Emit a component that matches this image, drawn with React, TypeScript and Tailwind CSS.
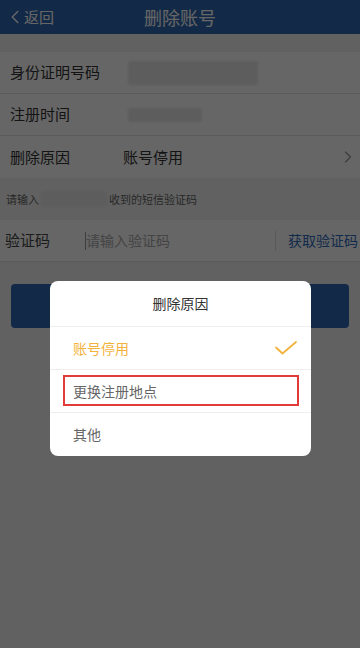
import { ChevronLeft, ChevronRight } from "lucide-react";

const FONT = { fontFamily: '"Noto Sans CJK SC", "Noto Sans", sans-serif' };

const REASONS = ["账号停用", "更换注册地点", "其他"];

export default function App() {
  return (
    <div className="relative h-[648px] w-[360px] overflow-hidden bg-[#f2f2f2]" style={FONT}>
      {/* top bar */}
      <div className="relative flex h-[34px] items-center justify-center bg-[#2f69b2]">
        <div className="absolute left-[4px] top-0 flex h-full items-center text-[15px] text-white">
          <ChevronLeft className="size-[22px]" strokeWidth={1.6} />
          <span className="-ml-[2px]">返回</span>
        </div>
        <h1 className="text-[18px] text-white">删除账号</h1>
      </div>

      <div className="mt-[18px] bg-white">
        <div className="flex h-[42px] items-center border-b border-[#e2e2e2] pl-[10px]">
          <span className="w-[118px] text-[15px] text-[#333]">身份证明号码</span>
          <div className="h-[24px] w-[130px] rounded-[2px] bg-[#e8e8e8] blur-[1px]" />
        </div>
        <div className="flex h-[42px] items-center border-b border-[#e2e2e2] pl-[10px]">
          <span className="w-[118px] text-[15px] text-[#333]">注册时间</span>
          <div className="h-[14px] w-[74px] rounded-[2px] bg-[#e8e8e8] blur-[1px]" />
        </div>
        <div className="flex h-[42px] items-center pl-[10px] pr-[2px]">
          <span className="w-[113px] text-[15px] text-[#333]">删除原因</span>
          <span className="flex-1 text-[15px] text-[#333]">账号停用</span>
          <ChevronRight className="size-[20px] text-[#999]" strokeWidth={1.5} />
        </div>
      </div>

      <div className="flex h-[42px] items-center pl-[6px] text-[11px] text-[#666]">
        <span>请输入</span>
        <span className="mx-[2px] h-[16px] w-[66px] rounded-[4px] bg-[#e8e8e8] blur-[1px]" />
        <span>收到的短信验证码</span>
      </div>

      <div className="flex h-[42px] items-center border-b border-[#e2e2e2] bg-white pl-[5px]">
        <span className="w-[80px] text-[15px] text-[#444]">验证码</span>
        <span className="h-[18px] w-px bg-[#999]" />
        <span className="flex-1 text-[14px] text-[#aaa]">请输入验证码</span>
        <span className="h-[20px] w-px bg-[#ddd]" />
        <span className="ml-[12px] pr-[2px] text-[14px] text-[#2f6bbd]">获取验证码</span>
      </div>

      <div className="mx-[11px] mt-[22px] h-[44px] rounded-[4px] bg-[#2f69b2]" />

      {/* overlay */}
      <div className="absolute inset-0 bg-black/60" />

      {/* dialog */}
      <div className="absolute left-[50px] top-[281px] w-[261px] rounded-[8px] bg-white">
        <div className="flex h-[46px] items-center justify-center border-b border-[#eeeeee] text-[14px] text-[#333]">
          删除原因
        </div>
        {REASONS.map((r, i) => (
          <div
            key={r}
            className={
              i < 2
                ? "relative flex h-[43px] items-center justify-between border-b border-[#eeeeee] pl-[23px] pr-[14px]"
                : "relative flex h-[43px] items-center justify-between pl-[23px] pr-[14px]"
            }
          >
            <span className={i === 0 ? "text-[14px] text-[#f3b23d]" : "text-[14px] text-[#666]"}>{r}</span>
            {i === 0 && (
              <svg width="22" height="14" viewBox="0 0 22 14" fill="none">
                <path d="M1 6.5 L7.5 12.5 L21 1" stroke="#f3b23d" strokeWidth="1.8" strokeLinecap="round" strokeLinejoin="round" />
              </svg>
            )}
            {i === 1 && (
              <div className="absolute left-[13px] top-[5px] h-[31px] w-[236px] border-2 border-[#e33a3a]" />
            )}
          </div>
        ))}
      </div>
    </div>
  );
}
